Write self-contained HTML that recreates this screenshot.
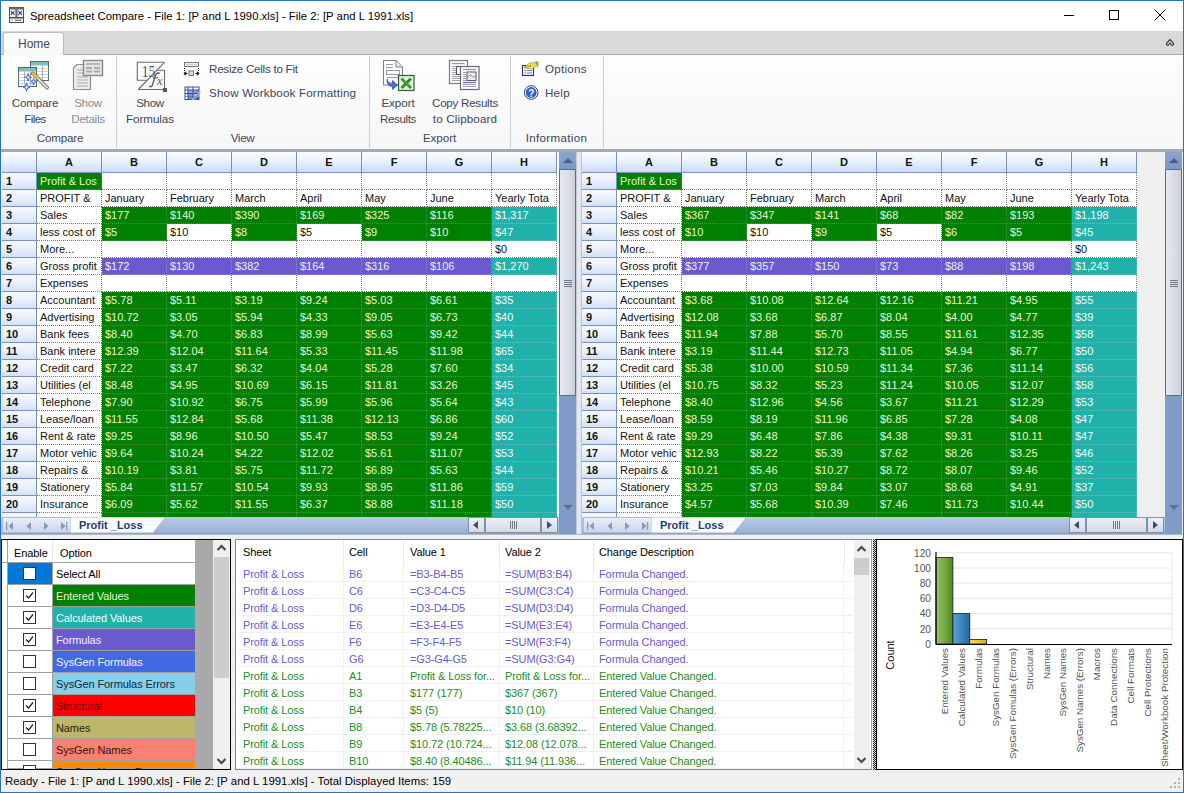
<!DOCTYPE html><html><head><meta charset="utf-8"><style>
*{margin:0;padding:0;box-sizing:border-box}
html,body{width:1184px;height:793px;overflow:hidden;background:#f0f0f0;font-family:"Liberation Sans",sans-serif;color:#000}
.abs{position:absolute}
#win{position:absolute;left:0;top:0;width:1184px;height:793px;border:1px solid #2a72c0;}
#title{position:absolute;left:1px;top:1px;width:1182px;height:30px;background:#fff}
#titletext{position:absolute;left:30px;top:10px;font-size:11.3px;color:#000;white-space:nowrap;letter-spacing:0.026px}
#tabstrip{position:absolute;left:1px;top:31px;width:1182px;height:24px;background:#d9d9d9;border-bottom:1px solid #a8a8a8}
#hometab{position:absolute;left:3px;top:32px;width:61px;height:23px;background:linear-gradient(#fdfdfd,#f8f8f8);border:1px solid #bdbdbd;border-bottom:none;border-radius:3px 3px 0 0}
#hometab span{position:absolute;left:14px;top:4px;font-size:12px;color:#3b4a5e}
#ribbon{position:absolute;left:1px;top:55px;width:1182px;height:94px;background:linear-gradient(#fdfdfd,#f7f7f7)}
.rsep{position:absolute;top:56px;width:1px;height:92px;background:#c9ced6}
.rt{position:absolute;font-size:11.6px;color:#3c4656;white-space:nowrap;line-height:14px}
.rc{text-align:center}
.dis{color:#8c8c8c}
#ribline{position:absolute;left:1px;top:149px;width:1182px;height:3px;background:#a3aab6}
.pane{position:absolute;top:152px;height:382px;overflow:hidden;background:#fff}
.hdr{position:absolute;top:0;height:21px;background:linear-gradient(#fbfdff 0%,#eaf2fd 45%,#cadcf7 100%);border-right:1px solid #7890bb;border-bottom:1px solid #7890bb;font-weight:bold;font-size:11px;text-align:center;line-height:20px;color:#111}
.rh{position:absolute;left:0;height:17px;background:linear-gradient(#f6f9fe 0%,#e9f0fc 50%,#d3e1f7 100%);border-right:1px solid #7890bb;border-bottom:1px solid #7890bb;font-weight:bold;font-size:11px;line-height:16px;padding-left:4px;color:#111}
.c{position:absolute;height:17px;border-right:1px dotted #7a7a7a;border-bottom:1px dotted #7a7a7a;font-size:11px;line-height:16px;padding-left:3px;white-space:nowrap;overflow:hidden;color:#111}
.ot{position:absolute;font-size:11px;line-height:14px;white-space:nowrap;letter-spacing:-0.1px}
.g{background:#008000;color:#e6f8d6;border-color:#3f9a3f}
.t{background:#20b2aa;color:#effffa;border-color:#5ac8c0}
.p{background:#6a5acd;color:#f0eeff;border-color:#8f84d9}
</style></head><body>
<div id="win"></div>
<div id="title"></div>
<div id="titletext">Spreadsheet Compare - File 1: [P and L 1990.xls] - File 2: [P and L 1991.xls]</div>
<div id="tabstrip"></div><div id="hometab"><span>Home</span></div>
<div id="ribbon"></div>
<div class="rsep" style="left:116px"></div>
<div class="rsep" style="left:369px"></div>
<div class="rsep" style="left:510px"></div>
<div class="rsep" style="left:603px"></div>
<div class="rt rc" style="left:4px;top:96px;letter-spacing:-0.165px;width:62px;">Compare</div>
<div class="rt rc" style="left:4px;top:112px;letter-spacing:-0.621px;width:62px;">Files</div>
<div class="rt rc dis" style="left:61px;top:96px;letter-spacing:-0.339px;width:54px;">Show</div>
<div class="rt rc dis" style="left:61px;top:112px;letter-spacing:-0.292px;width:54px;">Details</div>
<div class="rt rc" style="left:4px;top:131px;letter-spacing:-0.165px;width:112px;">Compare</div>
<div class="rt rc" style="left:120px;top:96px;letter-spacing:-0.339px;width:60px;">Show</div>
<div class="rt rc" style="left:120px;top:112px;letter-spacing:-0.061px;width:60px;">Formulas</div>
<div class="rt " style="left:209px;top:62px;letter-spacing:-0.246px;">Resize Cells to Fit</div>
<div class="rt " style="left:209px;top:86px;letter-spacing:0.181px;">Show Workbook Formatting</div>
<div class="rt rc" style="left:116px;top:131px;letter-spacing:-0.307px;width:253px;">View</div>
<div class="rt rc" style="left:372px;top:96px;letter-spacing:-0.043px;width:52px;">Export</div>
<div class="rt rc" style="left:372px;top:112px;letter-spacing:-0.379px;width:52px;">Results</div>
<div class="rt rc" style="left:426px;top:96px;letter-spacing:-0.25px;width:78px;">Copy Results</div>
<div class="rt rc" style="left:426px;top:112px;letter-spacing:0.162px;width:78px;">to Clipboard</div>
<div class="rt rc" style="left:369px;top:131px;letter-spacing:-0.043px;width:141px;">Export</div>
<div class="rt " style="left:545px;top:62px;letter-spacing:0.272px;">Options</div>
<div class="rt " style="left:545px;top:86px;letter-spacing:0.247px;">Help</div>
<div class="rt rc" style="left:510px;top:131px;letter-spacing:0.32px;width:93px;">Information</div>
<svg class="abs" style="left:8px;top:6px" width="18" height="18" viewBox="0 0 18 18"><rect x="1.5" y="1.5" width="6.5" height="10" fill="#fff" stroke="#505050" stroke-width="1.1"/><rect x="9" y="1.5" width="6.5" height="10" fill="#fff" stroke="#505050" stroke-width="1.1"/><rect x="1.5" y="1.5" width="6.5" height="2" fill="#6a6a6a"/><rect x="9" y="1.5" width="6.5" height="2" fill="#6a6a6a"/><path d="M2.8,5 l3.8,4 M6.6,5 l-3.8,4 M10.3,5 l3.8,4 M14.1,5 l-3.8,4" stroke="#3a6494" stroke-width="1.1"/><rect x="3.9" y="6.2" width="1.6" height="1.6" fill="#1f4a7a"/><rect x="11.4" y="6.2" width="1.6" height="1.6" fill="#1f4a7a"/><rect x="1.5" y="12" width="14" height="4.5" fill="#fff" stroke="#505050" stroke-width="1.1"/><line x1="3.5" y1="14.3" x2="5" y2="14.3" stroke="#888"/><line x1="7" y1="14.3" x2="13.5" y2="14.3" stroke="#777" stroke-width="1.3"/></svg>
<svg class="abs" style="left:14px;top:56px" width="40" height="40" viewBox="0 0 40 40"><rect x="16.5" y="5.5" width="18" height="19" fill="#fff" stroke="#4d6a72" stroke-width="1"/><rect x="17" y="6" width="17" height="3.5" fill="#7fbfb8"/><line x1="16.5" y1="12.5" x2="34.5" y2="12.5" stroke="#e0c8c8" stroke-width="0.9"/><line x1="16.5" y1="15.5" x2="34.5" y2="15.5" stroke="#d8d0a8" stroke-width="0.9"/><line x1="16.5" y1="18.5" x2="34.5" y2="18.5" stroke="#c8c0e0" stroke-width="0.9"/><line x1="16.5" y1="21.5" x2="34.5" y2="21.5" stroke="#d0c8d0" stroke-width="0.9"/><line x1="28.5" y1="9.5" x2="28.5" y2="24.5" stroke="#8a9ab0" stroke-width="0.8"/><rect x="4.5" y="11.5" width="18" height="19" fill="#fff" stroke="#4d6a72" stroke-width="1"/><rect x="5" y="12" width="17" height="3.5" fill="#7fbfb8"/><line x1="4.5" y1="18.5" x2="22.5" y2="18.5" stroke="#e0c8c8" stroke-width="0.9"/><line x1="4.5" y1="21.5" x2="22.5" y2="21.5" stroke="#d8d0a8" stroke-width="0.9"/><line x1="4.5" y1="24.5" x2="22.5" y2="24.5" stroke="#c8c0e0" stroke-width="0.9"/><line x1="4.5" y1="27.5" x2="22.5" y2="27.5" stroke="#d0c8d0" stroke-width="0.9"/><line x1="10.5" y1="15.5" x2="10.5" y2="30.5" stroke="#8a9ab0" stroke-width="0.8"/><line x1="16.5" y1="15.5" x2="16.5" y2="30.5" stroke="#8a9ab0" stroke-width="0.8"/><line x1="19" y1="17.5" x2="33" y2="31.5" stroke="#4a4a4a" stroke-width="3.6" stroke-linecap="round"/><line x1="19" y1="17.5" x2="33" y2="31.5" stroke="#e4e4d4" stroke-width="2.2" stroke-linecap="round"/><line x1="19" y1="17.5" x2="23.5" y2="22" stroke="#e8c030" stroke-width="2.4" stroke-linecap="round"/><circle cx="13" cy="30" r="4.5" fill="#c0d0ff" opacity="0.3"/><path d="M14.2,17.5 L15.149999999999999,20.35 L17.43,21.3 L15.149999999999999,22.25 L14.2,25.1 L13.25,22.25 L10.969999999999999,21.3 L13.25,20.35 Z" fill="#dde4ff" stroke="#3a58d0" stroke-width="0.9"/><path d="M19.6,22.3 L20.425,24.775000000000002 L22.405,25.6 L20.425,26.425 L19.6,28.900000000000002 L18.775000000000002,26.425 L16.795,25.6 L18.775000000000002,24.775000000000002 Z" fill="#dde4ff" stroke="#3a58d0" stroke-width="0.9"/><path d="M12.6,27.2 L13.6,30.2 L16.0,31.2 L13.6,32.2 L12.6,35.2 L11.6,32.2 L9.2,31.2 L11.6,30.2 Z" fill="#dde4ff" stroke="#3a58d0" stroke-width="0.9"/></svg>
<svg class="abs" style="left:68px;top:56px" width="40" height="40" viewBox="0 0 40 40"><path d="M5.5,12 L9,8.5 L22.5,8.5 L22.5,33.5 L5.5,33.5 Z" fill="#ececec" stroke="#8c8c8c" stroke-width="1.2"/><line x1="9" y1="14" x2="20" y2="14" stroke="#a8a8a8" stroke-width="1"/><line x1="9" y1="17" x2="20" y2="17" stroke="#a8a8a8" stroke-width="1"/><line x1="9" y1="21" x2="20" y2="21" stroke="#a8a8a8" stroke-width="1"/><line x1="9" y1="24" x2="20" y2="24" stroke="#a8a8a8" stroke-width="1"/><line x1="9" y1="27" x2="20" y2="27" stroke="#a8a8a8" stroke-width="1"/><line x1="9" y1="30" x2="20" y2="30" stroke="#a8a8a8" stroke-width="1"/><rect x="15.5" y="4.5" width="19" height="15" fill="#e4e4e4" stroke="#8a8a8a" stroke-width="1.4"/><line x1="18" y1="8" x2="32" y2="8" stroke="#aaa" stroke-width="1.5"/><rect x="18" y="11" width="6" height="2" fill="#aaa"/><rect x="26" y="11" width="6" height="2" fill="#aaa"/><rect x="18" y="14.5" width="6" height="2" fill="#aaa"/><rect x="26" y="14.5" width="6" height="2" fill="#aaa"/></svg>
<svg class="abs" style="left:132px;top:58px" width="40" height="40" viewBox="0 0 40 40"><path d="M14,22.3 L5.3,22.3 L5.3,4.3 L32.5,4.3" fill="none" stroke="#6a6a6a" stroke-width="1.1"/><path d="M25,12.3 L32.5,12.3 L32.5,31.5 L6.3,31.5" fill="none" stroke="#6a6a6a" stroke-width="1.1"/><line x1="6.3" y1="31.5" x2="32.5" y2="4.3" stroke="#6a6a6a" stroke-width="1.1"/><rect x="31" y="30" width="4" height="4" fill="#5a5a5a"/><text x="9.8" y="19" font-family="Liberation Serif" font-size="17.5" fill="#555" textLength="13.5" lengthAdjust="spacingAndGlyphs">15</text><path d="M17.3,28.3 Q19.3,30 20.6,26.5 L23.4,17.5 Q24.6,14.2 27.8,15.2" fill="none" stroke="#555" stroke-width="1.3"/><path d="M20.8,19.8 H26" stroke="#555" stroke-width="1.1"/><text x="25" y="27" font-family="Liberation Serif" font-style="italic" font-size="12" fill="#555">x</text></svg>
<svg class="abs" style="left:178px;top:58px" width="28" height="46" viewBox="0 0 28 46"><rect x="6.5" y="4.5" width="14" height="4" fill="#eef2f8" stroke="#777" stroke-width="1"/><line x1="8" y1="6.5" x2="19" y2="6.5" stroke="#c0cce0" stroke-width="1"/><path d="M6.5,10 v1 M6.5,12 v1 M20.5,10 v1 M20.5,12 v1" stroke="#111" stroke-width="1"/><path d="M6,15.5 h3.5 M6,15.5 l2,-1.5 M6,15.5 l2,1.5 M21,15.5 h-3.5 M21,15.5 l-2,-1.5 M21,15.5 l-2,1.5" stroke="#111" stroke-width="1.2"/><rect x="11" y="13" width="4.5" height="4.5" fill="#ddd" stroke="#777" stroke-width="1"/><rect x="6.5" y="28.5" width="15" height="13.5" fill="#3c4c8c"/><rect x="7.5" y="29.5" width="2" height="2" fill="#fff"/><rect x="10.5" y="29.5" width="4" height="2" fill="#fff"/><rect x="15.5" y="29.5" width="5" height="2" fill="#fff"/><rect x="7.5" y="32.5" width="2" height="2.5" fill="#fff"/><rect x="7.5" y="36" width="2" height="2.5" fill="#fff"/><rect x="7.5" y="39" width="2" height="2" fill="#fff"/><rect x="10.5" y="32.5" width="4" height="2.5" fill="#8fb0e8"/><rect x="15.5" y="32.5" width="5" height="2.5" fill="#6fa8e8"/><rect x="10.5" y="36" width="4" height="2.5" fill="#7aa0e0"/><rect x="15.5" y="36" width="5" height="2.5" fill="#9ac0f0"/><rect x="10.5" y="39" width="4" height="2" fill="#7090d8"/><path d="M13,43 Q15,39 20,36 L21.5,37.5 Q18,41 13,43 Z" fill="#5a80d8" stroke="#fff" stroke-width="0.5"/><path d="M19.5,36 L22,33 L23,35.5 Z" fill="#e8c850"/></svg>
<svg class="abs" style="left:378px;top:56px" width="40" height="40" viewBox="0 0 40 40"><path d="M5.5,4.5 L18,4.5 L24.5,11 L24.5,29 L5.5,29 Z" fill="#fff" stroke="#7c8090" stroke-width="1.1"/><path d="M18,4.5 L18,11 L24.5,11" fill="#e6e8f4" stroke="#7c8090" stroke-width="1"/><path d="M8,8.5 h7 M8,11.5 h7" stroke="#8a8f9f" stroke-width="0.9"/><rect x="8.5" y="14.5" width="13" height="4" fill="#fff" stroke="#8a8f9f" stroke-width="0.9"/><path d="M8.5,21.5 h13" stroke="#8a8f9f" stroke-width="0.9"/><path d="M9,23 Q10,27.5 14.5,27.5 L14.5,24.5 L19.5,29 L14.5,33.5 L14.5,30.5 Q9,30.5 9,23 Z" fill="#4a6ed8" stroke="#2a3ea0" stroke-width="0.7"/><rect x="20.5" y="19.5" width="15.5" height="15" fill="#e2f4d8" stroke="#2e5a34" stroke-width="1.2"/><path d="M23.5,22.5 L33,32 M33,22.5 L23.5,32" stroke="#2a8a2a" stroke-width="2.8"/><path d="M24,22.5 L33,31.5" stroke="#5fc04a" stroke-width="1"/></svg>
<svg class="abs" style="left:444px;top:56px" width="40" height="40" viewBox="0 0 40 40"><rect x="5.5" y="4.5" width="18" height="23" fill="#fff" stroke="#7a7a88" stroke-width="1.2"/><line x1="8" y1="7.5" x2="20.5" y2="7.5" stroke="#999" stroke-width="1.3"/><line x1="8" y1="10.5" x2="12" y2="10.5" stroke="#8a8a9a" stroke-width="0.8"/><line x1="8" y1="12.5" x2="12" y2="12.5" stroke="#8a8a9a" stroke-width="0.8"/><line x1="8" y1="14.5" x2="12" y2="14.5" stroke="#8a8a9a" stroke-width="0.8"/><line x1="8" y1="16.5" x2="12" y2="16.5" stroke="#8a8a9a" stroke-width="0.8"/><line x1="8" y1="18.5" x2="12" y2="18.5" stroke="#8a8a9a" stroke-width="0.8"/><path d="M8,20.5 h13 M8,22.5 h13 M8,24.5 h13" stroke="#8a8a9a" stroke-width="0.8"/><rect x="12.5" y="10.5" width="5" height="8" fill="#fff" stroke="#555" stroke-width="1"/><rect x="16.5" y="10.5" width="18.5" height="23" fill="#fff" stroke="#6a6a7a" stroke-width="1.2"/><line x1="19" y1="13.5" x2="32" y2="13.5" stroke="#999" stroke-width="1.3"/><line x1="19" y1="16.5" x2="22" y2="16.5" stroke="#8a8a9a" stroke-width="0.8"/><line x1="19" y1="18.5" x2="22" y2="18.5" stroke="#8a8a9a" stroke-width="0.8"/><line x1="19" y1="20.5" x2="22" y2="20.5" stroke="#8a8a9a" stroke-width="0.8"/><line x1="19" y1="22.5" x2="22" y2="22.5" stroke="#8a8a9a" stroke-width="0.8"/><line x1="19" y1="24.5" x2="22" y2="24.5" stroke="#8a8a9a" stroke-width="0.8"/><rect x="23" y="16" width="9" height="8.5" fill="#f4f4f4" stroke="#555" stroke-width="1"/><path d="M23.5,21 L26.5,18.5 L29,21.5 L31.5,19.5" fill="none" stroke="#666" stroke-width="0.8"/><path d="M19,26.5 h13" stroke="#5a6ad0" stroke-width="1.2"/><path d="M19,28.5 h13 M19,30.5 h13" stroke="#8a8a9a" stroke-width="0.8"/></svg>
<svg class="abs" style="left:516px;top:58px" width="28" height="46" viewBox="0 0 28 46"><rect x="6.5" y="7.5" width="11" height="10" fill="#f4f4ff" stroke="#2e3460" stroke-width="1.1"/><path d="M8.5,12.5 h1.5 M11,12.5 h5 M8.5,15 h1.5 M11,15 h5" stroke="#6a70a0" stroke-width="0.9"/><path d="M8,10 L13,5 L20,4.5 L22,7 L16,11 Z" fill="#e8d860" stroke="#a09020" stroke-width="0.6"/><path d="M9,9.5 l2,-2 M11,9.5 l2,-2 M13,9 l2,-2" stroke="#707040" stroke-width="0.8"/><path d="M19,3.5 L22.5,3.5 L22,10 Z" fill="#80b050"/><circle cx="15.2" cy="34.5" r="6.8" fill="#fff" stroke="#2a3a80" stroke-width="1"/><circle cx="15.2" cy="34.5" r="5.4" fill="#2f5ec8"/><text x="15.2" y="38.5" font-family="Liberation Sans" font-weight="bold" font-size="10" fill="#fff" text-anchor="middle">?</text></svg>
<div class="abs" style="left:1064px;top:15px;width:10px;height:1px;background:#000"></div>
<div class="abs" style="left:1109px;top:10px;width:10px;height:10px;border:1px solid #000"></div>
<svg class="abs" style="left:1154px;top:9px" width="12" height="12" viewBox="0 0 12 12"><path d="M0.5,0.5 L11.5,11.5 M11.5,0.5 L0.5,11.5" stroke="#000" stroke-width="1"/></svg>
<svg class="abs" style="left:1164px;top:36px" width="12" height="12" viewBox="0 0 12 12"><path d="M2.5,7.5 L6,3.5 L9.5,7.5 Q9.8,9.3 8,9.3 L6,7.2 L4,9.3 Q2.2,9.3 2.5,7.5 Z" fill="none" stroke="#444" stroke-width="1.2" stroke-linejoin="round"/></svg>
<div id="ribline"></div>
<div class="pane" style="left:2px;width:557px">
<div class="hdr" style="left:0;width:35px"></div>
<div class="hdr" style="left:35px;width:65px">A</div>
<div class="hdr" style="left:100px;width:65px">B</div>
<div class="hdr" style="left:165px;width:65px">C</div>
<div class="hdr" style="left:230px;width:65px">D</div>
<div class="hdr" style="left:295px;width:65px">E</div>
<div class="hdr" style="left:360px;width:65px">F</div>
<div class="hdr" style="left:425px;width:65px">G</div>
<div class="hdr" style="left:490px;width:65px">H</div>
<div class="rh" style="top:21px;width:35px">1</div>
<div class="c g" style="left:35px;top:21px;width:65px">Profit &amp; Los</div>
<div class="c " style="left:100px;top:21px;width:65px"></div>
<div class="c " style="left:165px;top:21px;width:65px"></div>
<div class="c " style="left:230px;top:21px;width:65px"></div>
<div class="c " style="left:295px;top:21px;width:65px"></div>
<div class="c " style="left:360px;top:21px;width:65px"></div>
<div class="c " style="left:425px;top:21px;width:65px"></div>
<div class="c " style="left:490px;top:21px;width:65px"></div>
<div class="rh" style="top:38px;width:35px">2</div>
<div class="c " style="left:35px;top:38px;width:65px">PROFIT &amp;</div>
<div class="c " style="left:100px;top:38px;width:65px">January</div>
<div class="c " style="left:165px;top:38px;width:65px">February</div>
<div class="c " style="left:230px;top:38px;width:65px">March</div>
<div class="c " style="left:295px;top:38px;width:65px">April</div>
<div class="c " style="left:360px;top:38px;width:65px">May</div>
<div class="c " style="left:425px;top:38px;width:65px">June</div>
<div class="c " style="left:490px;top:38px;width:65px">Yearly Tota</div>
<div class="rh" style="top:55px;width:35px">3</div>
<div class="c " style="left:35px;top:55px;width:65px">Sales</div>
<div class="c g" style="left:100px;top:55px;width:65px">$177</div>
<div class="c g" style="left:165px;top:55px;width:65px">$140</div>
<div class="c g" style="left:230px;top:55px;width:65px">$390</div>
<div class="c g" style="left:295px;top:55px;width:65px">$169</div>
<div class="c g" style="left:360px;top:55px;width:65px">$325</div>
<div class="c g" style="left:425px;top:55px;width:65px">$116</div>
<div class="c t" style="left:490px;top:55px;width:65px">$1,317</div>
<div class="rh" style="top:72px;width:35px">4</div>
<div class="c " style="left:35px;top:72px;width:65px">less cost of</div>
<div class="c g" style="left:100px;top:72px;width:65px">$5</div>
<div class="c " style="left:165px;top:72px;width:65px">$10</div>
<div class="c g" style="left:230px;top:72px;width:65px">$8</div>
<div class="c " style="left:295px;top:72px;width:65px">$5</div>
<div class="c g" style="left:360px;top:72px;width:65px">$9</div>
<div class="c g" style="left:425px;top:72px;width:65px">$10</div>
<div class="c t" style="left:490px;top:72px;width:65px">$47</div>
<div class="rh" style="top:89px;width:35px">5</div>
<div class="c " style="left:35px;top:89px;width:65px">More...</div>
<div class="c " style="left:100px;top:89px;width:65px"></div>
<div class="c " style="left:165px;top:89px;width:65px"></div>
<div class="c " style="left:230px;top:89px;width:65px"></div>
<div class="c " style="left:295px;top:89px;width:65px"></div>
<div class="c " style="left:360px;top:89px;width:65px"></div>
<div class="c " style="left:425px;top:89px;width:65px"></div>
<div class="c " style="left:490px;top:89px;width:65px">$0</div>
<div class="rh" style="top:106px;width:35px">6</div>
<div class="c " style="left:35px;top:106px;width:65px">Gross profit</div>
<div class="c p" style="left:100px;top:106px;width:65px">$172</div>
<div class="c p" style="left:165px;top:106px;width:65px">$130</div>
<div class="c p" style="left:230px;top:106px;width:65px">$382</div>
<div class="c p" style="left:295px;top:106px;width:65px">$164</div>
<div class="c p" style="left:360px;top:106px;width:65px">$316</div>
<div class="c p" style="left:425px;top:106px;width:65px">$106</div>
<div class="c t" style="left:490px;top:106px;width:65px">$1,270</div>
<div class="rh" style="top:123px;width:35px">7</div>
<div class="c " style="left:35px;top:123px;width:65px">Expenses</div>
<div class="c " style="left:100px;top:123px;width:65px"></div>
<div class="c " style="left:165px;top:123px;width:65px"></div>
<div class="c " style="left:230px;top:123px;width:65px"></div>
<div class="c " style="left:295px;top:123px;width:65px"></div>
<div class="c " style="left:360px;top:123px;width:65px"></div>
<div class="c " style="left:425px;top:123px;width:65px"></div>
<div class="c " style="left:490px;top:123px;width:65px"></div>
<div class="rh" style="top:140px;width:35px">8</div>
<div class="c " style="left:35px;top:140px;width:65px">Accountant</div>
<div class="c g" style="left:100px;top:140px;width:65px">$5.78</div>
<div class="c g" style="left:165px;top:140px;width:65px">$5.11</div>
<div class="c g" style="left:230px;top:140px;width:65px">$3.19</div>
<div class="c g" style="left:295px;top:140px;width:65px">$9.24</div>
<div class="c g" style="left:360px;top:140px;width:65px">$5.03</div>
<div class="c g" style="left:425px;top:140px;width:65px">$6.61</div>
<div class="c t" style="left:490px;top:140px;width:65px">$35</div>
<div class="rh" style="top:157px;width:35px">9</div>
<div class="c " style="left:35px;top:157px;width:65px">Advertising</div>
<div class="c g" style="left:100px;top:157px;width:65px">$10.72</div>
<div class="c g" style="left:165px;top:157px;width:65px">$3.05</div>
<div class="c g" style="left:230px;top:157px;width:65px">$5.94</div>
<div class="c g" style="left:295px;top:157px;width:65px">$4.33</div>
<div class="c g" style="left:360px;top:157px;width:65px">$9.05</div>
<div class="c g" style="left:425px;top:157px;width:65px">$6.73</div>
<div class="c t" style="left:490px;top:157px;width:65px">$40</div>
<div class="rh" style="top:174px;width:35px">10</div>
<div class="c " style="left:35px;top:174px;width:65px">Bank fees</div>
<div class="c g" style="left:100px;top:174px;width:65px">$8.40</div>
<div class="c g" style="left:165px;top:174px;width:65px">$4.70</div>
<div class="c g" style="left:230px;top:174px;width:65px">$6.83</div>
<div class="c g" style="left:295px;top:174px;width:65px">$8.99</div>
<div class="c g" style="left:360px;top:174px;width:65px">$5.63</div>
<div class="c g" style="left:425px;top:174px;width:65px">$9.42</div>
<div class="c t" style="left:490px;top:174px;width:65px">$44</div>
<div class="rh" style="top:191px;width:35px">11</div>
<div class="c " style="left:35px;top:191px;width:65px">Bank intere</div>
<div class="c g" style="left:100px;top:191px;width:65px">$12.39</div>
<div class="c g" style="left:165px;top:191px;width:65px">$12.04</div>
<div class="c g" style="left:230px;top:191px;width:65px">$11.64</div>
<div class="c g" style="left:295px;top:191px;width:65px">$5.33</div>
<div class="c g" style="left:360px;top:191px;width:65px">$11.45</div>
<div class="c g" style="left:425px;top:191px;width:65px">$11.98</div>
<div class="c t" style="left:490px;top:191px;width:65px">$65</div>
<div class="rh" style="top:208px;width:35px">12</div>
<div class="c " style="left:35px;top:208px;width:65px">Credit card</div>
<div class="c g" style="left:100px;top:208px;width:65px">$7.22</div>
<div class="c g" style="left:165px;top:208px;width:65px">$3.47</div>
<div class="c g" style="left:230px;top:208px;width:65px">$6.32</div>
<div class="c g" style="left:295px;top:208px;width:65px">$4.04</div>
<div class="c g" style="left:360px;top:208px;width:65px">$5.28</div>
<div class="c g" style="left:425px;top:208px;width:65px">$7.60</div>
<div class="c t" style="left:490px;top:208px;width:65px">$34</div>
<div class="rh" style="top:225px;width:35px">13</div>
<div class="c " style="left:35px;top:225px;width:65px">Utilities (el</div>
<div class="c g" style="left:100px;top:225px;width:65px">$8.48</div>
<div class="c g" style="left:165px;top:225px;width:65px">$4.95</div>
<div class="c g" style="left:230px;top:225px;width:65px">$10.69</div>
<div class="c g" style="left:295px;top:225px;width:65px">$6.15</div>
<div class="c g" style="left:360px;top:225px;width:65px">$11.81</div>
<div class="c g" style="left:425px;top:225px;width:65px">$3.26</div>
<div class="c t" style="left:490px;top:225px;width:65px">$45</div>
<div class="rh" style="top:242px;width:35px">14</div>
<div class="c " style="left:35px;top:242px;width:65px">Telephone</div>
<div class="c g" style="left:100px;top:242px;width:65px">$7.90</div>
<div class="c g" style="left:165px;top:242px;width:65px">$10.92</div>
<div class="c g" style="left:230px;top:242px;width:65px">$6.75</div>
<div class="c g" style="left:295px;top:242px;width:65px">$5.99</div>
<div class="c g" style="left:360px;top:242px;width:65px">$5.96</div>
<div class="c g" style="left:425px;top:242px;width:65px">$5.64</div>
<div class="c t" style="left:490px;top:242px;width:65px">$43</div>
<div class="rh" style="top:259px;width:35px">15</div>
<div class="c " style="left:35px;top:259px;width:65px">Lease/loan</div>
<div class="c g" style="left:100px;top:259px;width:65px">$11.55</div>
<div class="c g" style="left:165px;top:259px;width:65px">$12.84</div>
<div class="c g" style="left:230px;top:259px;width:65px">$5.68</div>
<div class="c g" style="left:295px;top:259px;width:65px">$11.38</div>
<div class="c g" style="left:360px;top:259px;width:65px">$12.13</div>
<div class="c g" style="left:425px;top:259px;width:65px">$6.86</div>
<div class="c t" style="left:490px;top:259px;width:65px">$60</div>
<div class="rh" style="top:276px;width:35px">16</div>
<div class="c " style="left:35px;top:276px;width:65px">Rent &amp; rate</div>
<div class="c g" style="left:100px;top:276px;width:65px">$9.25</div>
<div class="c g" style="left:165px;top:276px;width:65px">$8.96</div>
<div class="c g" style="left:230px;top:276px;width:65px">$10.50</div>
<div class="c g" style="left:295px;top:276px;width:65px">$5.47</div>
<div class="c g" style="left:360px;top:276px;width:65px">$8.53</div>
<div class="c g" style="left:425px;top:276px;width:65px">$9.24</div>
<div class="c t" style="left:490px;top:276px;width:65px">$52</div>
<div class="rh" style="top:293px;width:35px">17</div>
<div class="c " style="left:35px;top:293px;width:65px">Motor vehic</div>
<div class="c g" style="left:100px;top:293px;width:65px">$9.64</div>
<div class="c g" style="left:165px;top:293px;width:65px">$10.24</div>
<div class="c g" style="left:230px;top:293px;width:65px">$4.22</div>
<div class="c g" style="left:295px;top:293px;width:65px">$12.02</div>
<div class="c g" style="left:360px;top:293px;width:65px">$5.61</div>
<div class="c g" style="left:425px;top:293px;width:65px">$11.07</div>
<div class="c t" style="left:490px;top:293px;width:65px">$53</div>
<div class="rh" style="top:310px;width:35px">18</div>
<div class="c " style="left:35px;top:310px;width:65px">Repairs &amp;</div>
<div class="c g" style="left:100px;top:310px;width:65px">$10.19</div>
<div class="c g" style="left:165px;top:310px;width:65px">$3.81</div>
<div class="c g" style="left:230px;top:310px;width:65px">$5.75</div>
<div class="c g" style="left:295px;top:310px;width:65px">$11.72</div>
<div class="c g" style="left:360px;top:310px;width:65px">$6.89</div>
<div class="c g" style="left:425px;top:310px;width:65px">$5.63</div>
<div class="c t" style="left:490px;top:310px;width:65px">$44</div>
<div class="rh" style="top:327px;width:35px">19</div>
<div class="c " style="left:35px;top:327px;width:65px">Stationery</div>
<div class="c g" style="left:100px;top:327px;width:65px">$5.84</div>
<div class="c g" style="left:165px;top:327px;width:65px">$11.57</div>
<div class="c g" style="left:230px;top:327px;width:65px">$10.54</div>
<div class="c g" style="left:295px;top:327px;width:65px">$9.93</div>
<div class="c g" style="left:360px;top:327px;width:65px">$8.95</div>
<div class="c g" style="left:425px;top:327px;width:65px">$11.86</div>
<div class="c t" style="left:490px;top:327px;width:65px">$59</div>
<div class="rh" style="top:344px;width:35px">20</div>
<div class="c " style="left:35px;top:344px;width:65px">Insurance</div>
<div class="c g" style="left:100px;top:344px;width:65px">$6.09</div>
<div class="c g" style="left:165px;top:344px;width:65px">$5.62</div>
<div class="c g" style="left:230px;top:344px;width:65px">$11.55</div>
<div class="c g" style="left:295px;top:344px;width:65px">$6.37</div>
<div class="c g" style="left:360px;top:344px;width:65px">$8.88</div>
<div class="c g" style="left:425px;top:344px;width:65px">$11.18</div>
<div class="c t" style="left:490px;top:344px;width:65px">$50</div>
<div class="rh" style="top:361px;width:35px"></div>
<div class="c " style="left:35px;top:361px;width:65px"></div>
<div class="c g" style="left:100px;top:361px;width:65px"></div>
<div class="c g" style="left:165px;top:361px;width:65px"></div>
<div class="c g" style="left:230px;top:361px;width:65px"></div>
<div class="c g" style="left:295px;top:361px;width:65px"></div>
<div class="c g" style="left:360px;top:361px;width:65px"></div>
<div class="c g" style="left:425px;top:361px;width:65px"></div>
<div class="c t" style="left:490px;top:361px;width:65px"></div>
</div>
<div class="pane" style="left:582px;width:583px">
<div class="hdr" style="left:0;width:35px"></div>
<div class="hdr" style="left:35px;width:65px">A</div>
<div class="hdr" style="left:100px;width:65px">B</div>
<div class="hdr" style="left:165px;width:65px">C</div>
<div class="hdr" style="left:230px;width:65px">D</div>
<div class="hdr" style="left:295px;width:65px">E</div>
<div class="hdr" style="left:360px;width:65px">F</div>
<div class="hdr" style="left:425px;width:65px">G</div>
<div class="hdr" style="left:490px;width:65px">H</div>
<div class="rh" style="top:21px;width:35px">1</div>
<div class="c g" style="left:35px;top:21px;width:65px">Profit &amp; Los</div>
<div class="c " style="left:100px;top:21px;width:65px"></div>
<div class="c " style="left:165px;top:21px;width:65px"></div>
<div class="c " style="left:230px;top:21px;width:65px"></div>
<div class="c " style="left:295px;top:21px;width:65px"></div>
<div class="c " style="left:360px;top:21px;width:65px"></div>
<div class="c " style="left:425px;top:21px;width:65px"></div>
<div class="c " style="left:490px;top:21px;width:65px"></div>
<div class="rh" style="top:38px;width:35px">2</div>
<div class="c " style="left:35px;top:38px;width:65px">PROFIT &amp;</div>
<div class="c " style="left:100px;top:38px;width:65px">January</div>
<div class="c " style="left:165px;top:38px;width:65px">February</div>
<div class="c " style="left:230px;top:38px;width:65px">March</div>
<div class="c " style="left:295px;top:38px;width:65px">April</div>
<div class="c " style="left:360px;top:38px;width:65px">May</div>
<div class="c " style="left:425px;top:38px;width:65px">June</div>
<div class="c " style="left:490px;top:38px;width:65px">Yearly Tota</div>
<div class="rh" style="top:55px;width:35px">3</div>
<div class="c " style="left:35px;top:55px;width:65px">Sales</div>
<div class="c g" style="left:100px;top:55px;width:65px">$367</div>
<div class="c g" style="left:165px;top:55px;width:65px">$347</div>
<div class="c g" style="left:230px;top:55px;width:65px">$141</div>
<div class="c g" style="left:295px;top:55px;width:65px">$68</div>
<div class="c g" style="left:360px;top:55px;width:65px">$82</div>
<div class="c g" style="left:425px;top:55px;width:65px">$193</div>
<div class="c t" style="left:490px;top:55px;width:65px">$1,198</div>
<div class="rh" style="top:72px;width:35px">4</div>
<div class="c " style="left:35px;top:72px;width:65px">less cost of</div>
<div class="c g" style="left:100px;top:72px;width:65px">$10</div>
<div class="c " style="left:165px;top:72px;width:65px">$10</div>
<div class="c g" style="left:230px;top:72px;width:65px">$9</div>
<div class="c " style="left:295px;top:72px;width:65px">$5</div>
<div class="c g" style="left:360px;top:72px;width:65px">$6</div>
<div class="c g" style="left:425px;top:72px;width:65px">$5</div>
<div class="c t" style="left:490px;top:72px;width:65px">$45</div>
<div class="rh" style="top:89px;width:35px">5</div>
<div class="c " style="left:35px;top:89px;width:65px">More...</div>
<div class="c " style="left:100px;top:89px;width:65px"></div>
<div class="c " style="left:165px;top:89px;width:65px"></div>
<div class="c " style="left:230px;top:89px;width:65px"></div>
<div class="c " style="left:295px;top:89px;width:65px"></div>
<div class="c " style="left:360px;top:89px;width:65px"></div>
<div class="c " style="left:425px;top:89px;width:65px"></div>
<div class="c " style="left:490px;top:89px;width:65px">$0</div>
<div class="rh" style="top:106px;width:35px">6</div>
<div class="c " style="left:35px;top:106px;width:65px">Gross profit</div>
<div class="c p" style="left:100px;top:106px;width:65px">$377</div>
<div class="c p" style="left:165px;top:106px;width:65px">$357</div>
<div class="c p" style="left:230px;top:106px;width:65px">$150</div>
<div class="c p" style="left:295px;top:106px;width:65px">$73</div>
<div class="c p" style="left:360px;top:106px;width:65px">$88</div>
<div class="c p" style="left:425px;top:106px;width:65px">$198</div>
<div class="c t" style="left:490px;top:106px;width:65px">$1,243</div>
<div class="rh" style="top:123px;width:35px">7</div>
<div class="c " style="left:35px;top:123px;width:65px">Expenses</div>
<div class="c " style="left:100px;top:123px;width:65px"></div>
<div class="c " style="left:165px;top:123px;width:65px"></div>
<div class="c " style="left:230px;top:123px;width:65px"></div>
<div class="c " style="left:295px;top:123px;width:65px"></div>
<div class="c " style="left:360px;top:123px;width:65px"></div>
<div class="c " style="left:425px;top:123px;width:65px"></div>
<div class="c " style="left:490px;top:123px;width:65px"></div>
<div class="rh" style="top:140px;width:35px">8</div>
<div class="c " style="left:35px;top:140px;width:65px">Accountant</div>
<div class="c g" style="left:100px;top:140px;width:65px">$3.68</div>
<div class="c g" style="left:165px;top:140px;width:65px">$10.08</div>
<div class="c g" style="left:230px;top:140px;width:65px">$12.64</div>
<div class="c g" style="left:295px;top:140px;width:65px">$12.16</div>
<div class="c g" style="left:360px;top:140px;width:65px">$11.21</div>
<div class="c g" style="left:425px;top:140px;width:65px">$4.95</div>
<div class="c t" style="left:490px;top:140px;width:65px">$55</div>
<div class="rh" style="top:157px;width:35px">9</div>
<div class="c " style="left:35px;top:157px;width:65px">Advertising</div>
<div class="c g" style="left:100px;top:157px;width:65px">$12.08</div>
<div class="c g" style="left:165px;top:157px;width:65px">$3.68</div>
<div class="c g" style="left:230px;top:157px;width:65px">$6.87</div>
<div class="c g" style="left:295px;top:157px;width:65px">$8.04</div>
<div class="c g" style="left:360px;top:157px;width:65px">$4.00</div>
<div class="c g" style="left:425px;top:157px;width:65px">$4.77</div>
<div class="c t" style="left:490px;top:157px;width:65px">$39</div>
<div class="rh" style="top:174px;width:35px">10</div>
<div class="c " style="left:35px;top:174px;width:65px">Bank fees</div>
<div class="c g" style="left:100px;top:174px;width:65px">$11.94</div>
<div class="c g" style="left:165px;top:174px;width:65px">$7.88</div>
<div class="c g" style="left:230px;top:174px;width:65px">$5.70</div>
<div class="c g" style="left:295px;top:174px;width:65px">$8.55</div>
<div class="c g" style="left:360px;top:174px;width:65px">$11.61</div>
<div class="c g" style="left:425px;top:174px;width:65px">$12.35</div>
<div class="c t" style="left:490px;top:174px;width:65px">$58</div>
<div class="rh" style="top:191px;width:35px">11</div>
<div class="c " style="left:35px;top:191px;width:65px">Bank intere</div>
<div class="c g" style="left:100px;top:191px;width:65px">$3.19</div>
<div class="c g" style="left:165px;top:191px;width:65px">$11.44</div>
<div class="c g" style="left:230px;top:191px;width:65px">$12.73</div>
<div class="c g" style="left:295px;top:191px;width:65px">$11.05</div>
<div class="c g" style="left:360px;top:191px;width:65px">$4.94</div>
<div class="c g" style="left:425px;top:191px;width:65px">$6.77</div>
<div class="c t" style="left:490px;top:191px;width:65px">$50</div>
<div class="rh" style="top:208px;width:35px">12</div>
<div class="c " style="left:35px;top:208px;width:65px">Credit card</div>
<div class="c g" style="left:100px;top:208px;width:65px">$5.38</div>
<div class="c g" style="left:165px;top:208px;width:65px">$10.00</div>
<div class="c g" style="left:230px;top:208px;width:65px">$10.59</div>
<div class="c g" style="left:295px;top:208px;width:65px">$11.34</div>
<div class="c g" style="left:360px;top:208px;width:65px">$7.36</div>
<div class="c g" style="left:425px;top:208px;width:65px">$11.14</div>
<div class="c t" style="left:490px;top:208px;width:65px">$56</div>
<div class="rh" style="top:225px;width:35px">13</div>
<div class="c " style="left:35px;top:225px;width:65px">Utilities (el</div>
<div class="c g" style="left:100px;top:225px;width:65px">$10.75</div>
<div class="c g" style="left:165px;top:225px;width:65px">$8.32</div>
<div class="c g" style="left:230px;top:225px;width:65px">$5.23</div>
<div class="c g" style="left:295px;top:225px;width:65px">$11.24</div>
<div class="c g" style="left:360px;top:225px;width:65px">$10.05</div>
<div class="c g" style="left:425px;top:225px;width:65px">$12.07</div>
<div class="c t" style="left:490px;top:225px;width:65px">$58</div>
<div class="rh" style="top:242px;width:35px">14</div>
<div class="c " style="left:35px;top:242px;width:65px">Telephone</div>
<div class="c g" style="left:100px;top:242px;width:65px">$8.40</div>
<div class="c g" style="left:165px;top:242px;width:65px">$12.96</div>
<div class="c g" style="left:230px;top:242px;width:65px">$4.56</div>
<div class="c g" style="left:295px;top:242px;width:65px">$3.67</div>
<div class="c g" style="left:360px;top:242px;width:65px">$11.21</div>
<div class="c g" style="left:425px;top:242px;width:65px">$12.29</div>
<div class="c t" style="left:490px;top:242px;width:65px">$53</div>
<div class="rh" style="top:259px;width:35px">15</div>
<div class="c " style="left:35px;top:259px;width:65px">Lease/loan</div>
<div class="c g" style="left:100px;top:259px;width:65px">$8.59</div>
<div class="c g" style="left:165px;top:259px;width:65px">$8.19</div>
<div class="c g" style="left:230px;top:259px;width:65px">$11.96</div>
<div class="c g" style="left:295px;top:259px;width:65px">$6.85</div>
<div class="c g" style="left:360px;top:259px;width:65px">$7.28</div>
<div class="c g" style="left:425px;top:259px;width:65px">$4.08</div>
<div class="c t" style="left:490px;top:259px;width:65px">$47</div>
<div class="rh" style="top:276px;width:35px">16</div>
<div class="c " style="left:35px;top:276px;width:65px">Rent &amp; rate</div>
<div class="c g" style="left:100px;top:276px;width:65px">$9.29</div>
<div class="c g" style="left:165px;top:276px;width:65px">$6.48</div>
<div class="c g" style="left:230px;top:276px;width:65px">$7.86</div>
<div class="c g" style="left:295px;top:276px;width:65px">$4.38</div>
<div class="c g" style="left:360px;top:276px;width:65px">$9.31</div>
<div class="c g" style="left:425px;top:276px;width:65px">$10.11</div>
<div class="c t" style="left:490px;top:276px;width:65px">$47</div>
<div class="rh" style="top:293px;width:35px">17</div>
<div class="c " style="left:35px;top:293px;width:65px">Motor vehic</div>
<div class="c g" style="left:100px;top:293px;width:65px">$12.93</div>
<div class="c g" style="left:165px;top:293px;width:65px">$8.22</div>
<div class="c g" style="left:230px;top:293px;width:65px">$5.39</div>
<div class="c g" style="left:295px;top:293px;width:65px">$7.62</div>
<div class="c g" style="left:360px;top:293px;width:65px">$8.26</div>
<div class="c g" style="left:425px;top:293px;width:65px">$3.25</div>
<div class="c t" style="left:490px;top:293px;width:65px">$46</div>
<div class="rh" style="top:310px;width:35px">18</div>
<div class="c " style="left:35px;top:310px;width:65px">Repairs &amp;</div>
<div class="c g" style="left:100px;top:310px;width:65px">$10.21</div>
<div class="c g" style="left:165px;top:310px;width:65px">$5.46</div>
<div class="c g" style="left:230px;top:310px;width:65px">$10.27</div>
<div class="c g" style="left:295px;top:310px;width:65px">$8.72</div>
<div class="c g" style="left:360px;top:310px;width:65px">$8.07</div>
<div class="c g" style="left:425px;top:310px;width:65px">$9.46</div>
<div class="c t" style="left:490px;top:310px;width:65px">$52</div>
<div class="rh" style="top:327px;width:35px">19</div>
<div class="c " style="left:35px;top:327px;width:65px">Stationery</div>
<div class="c g" style="left:100px;top:327px;width:65px">$3.25</div>
<div class="c g" style="left:165px;top:327px;width:65px">$7.03</div>
<div class="c g" style="left:230px;top:327px;width:65px">$9.84</div>
<div class="c g" style="left:295px;top:327px;width:65px">$3.07</div>
<div class="c g" style="left:360px;top:327px;width:65px">$8.68</div>
<div class="c g" style="left:425px;top:327px;width:65px">$4.91</div>
<div class="c t" style="left:490px;top:327px;width:65px">$37</div>
<div class="rh" style="top:344px;width:35px">20</div>
<div class="c " style="left:35px;top:344px;width:65px">Insurance</div>
<div class="c g" style="left:100px;top:344px;width:65px">$4.57</div>
<div class="c g" style="left:165px;top:344px;width:65px">$5.68</div>
<div class="c g" style="left:230px;top:344px;width:65px">$10.39</div>
<div class="c g" style="left:295px;top:344px;width:65px">$7.46</div>
<div class="c g" style="left:360px;top:344px;width:65px">$11.73</div>
<div class="c g" style="left:425px;top:344px;width:65px">$10.44</div>
<div class="c t" style="left:490px;top:344px;width:65px">$50</div>
<div class="rh" style="top:361px;width:35px"></div>
<div class="c " style="left:35px;top:361px;width:65px"></div>
<div class="c g" style="left:100px;top:361px;width:65px"></div>
<div class="c g" style="left:165px;top:361px;width:65px"></div>
<div class="c g" style="left:230px;top:361px;width:65px"></div>
<div class="c g" style="left:295px;top:361px;width:65px"></div>
<div class="c g" style="left:360px;top:361px;width:65px"></div>
<div class="c g" style="left:425px;top:361px;width:65px"></div>
<div class="c t" style="left:490px;top:361px;width:65px"></div>
</div>
<div class="abs" style="left:559px;top:152px;width:17px;height:382px;background:#7f9bc8"></div>
<div class="abs" style="left:559px;top:152px;width:17px;height:17px;background:linear-gradient(#8aa6d0,#7a98c6)"></div>
<div class="abs" style="left:563px;top:158px;width:0;height:0;border-left:5px solid transparent;border-right:5px solid transparent;border-bottom:5px solid #4a5f86"></div>
<div class="abs" style="left:559px;top:169px;width:17px;height:227px;background:linear-gradient(90deg,#e4e8ef,#d8dee8 55%,#c8d0dc);border:1px solid #5f6c88;border-radius:1px"></div>
<div class="abs" style="left:564px;top:280px;width:8px;height:1px;background:#707888"></div>
<div class="abs" style="left:564px;top:282px;width:8px;height:1px;background:#707888"></div>
<div class="abs" style="left:564px;top:284px;width:8px;height:1px;background:#707888"></div>
<div class="abs" style="left:564px;top:286px;width:8px;height:1px;background:#707888"></div>
<div class="abs" style="left:563px;top:505px;width:0;height:0;border-left:5px solid transparent;border-right:5px solid transparent;border-top:5px solid #5a6f96"></div>
<div class="abs" style="left:1165px;top:152px;width:17px;height:382px;background:#7f9bc8"></div>
<div class="abs" style="left:1165px;top:152px;width:17px;height:17px;background:linear-gradient(#8aa6d0,#7a98c6)"></div>
<div class="abs" style="left:1169px;top:158px;width:0;height:0;border-left:5px solid transparent;border-right:5px solid transparent;border-bottom:5px solid #4a5f86"></div>
<div class="abs" style="left:1165px;top:169px;width:17px;height:227px;background:linear-gradient(90deg,#e4e8ef,#d8dee8 55%,#c8d0dc);border:1px solid #5f6c88;border-radius:1px"></div>
<div class="abs" style="left:1170px;top:280px;width:8px;height:1px;background:#707888"></div>
<div class="abs" style="left:1170px;top:282px;width:8px;height:1px;background:#707888"></div>
<div class="abs" style="left:1170px;top:284px;width:8px;height:1px;background:#707888"></div>
<div class="abs" style="left:1170px;top:286px;width:8px;height:1px;background:#707888"></div>
<div class="abs" style="left:1169px;top:505px;width:0;height:0;border-left:5px solid transparent;border-right:5px solid transparent;border-top:5px solid #5a6f96"></div>
<div class="abs" style="left:576px;top:152px;width:6px;height:382px;background:#e3e7ee;border-left:1px solid #c3cad6;border-right:1px solid #b9c3d3"></div>
<div class="abs" style="left:1137px;top:152px;width:28px;height:365px;background:#efefef"></div>
<div class="abs" style="left:1px;top:517px;width:558px;height:17px;background:linear-gradient(#b9cbe6,#98b1d8);border-bottom:1px solid #8d9fbd"></div>
<div class="abs" style="left:2px;top:517px;width:69px;height:16px;background:linear-gradient(#e9eff8,#c9d7ee);border:1px solid #b0bdd3"></div>
<svg class="abs" style="left:1px;top:517px" width="70" height="17"><g fill="#8a98b0"><rect x="5" y="5" width="1.3" height="8"/><polygon points="12,5 7.5,9 12,13"/><polygon points="30,5 25.5,9 30,13"/><polygon points="43,5 47.5,9 43,13"/><polygon points="60,5 64.5,9 60,13"/><rect x="65" y="5" width="1.3" height="8"/></g></svg>
<svg class="abs" style="left:70px;top:517px" width="100" height="17"><polygon points="0,0 96,0 83,16 0,16" fill="#fbfcfe" stroke="#9fb0cc" stroke-width="1"/></svg>
<div class="abs" style="left:79px;top:518px;font-size:11px;font-weight:bold;color:#233a7d;white-space:nowrap;line-height:15px">Profit _Loss</div>
<div class="abs" style="left:468px;top:517px;width:17px;height:16px;background:linear-gradient(#eef1f6,#d4dbe6);border:1px solid #8090ad"></div>
<div class="abs" style="left:485px;top:517px;width:56px;height:16px;background:linear-gradient(#eef1f6,#d4dbe6);border:1px solid #8090ad"></div>
<div class="abs" style="left:541px;top:517px;width:17px;height:16px;background:linear-gradient(#eef1f6,#d4dbe6);border:1px solid #8090ad"></div>
<div class="abs" style="left:473px;top:521px;width:0;height:0;border-top:4px solid transparent;border-bottom:4px solid transparent;border-right:5px solid #3e4c66"></div>
<div class="abs" style="left:547px;top:521px;width:0;height:0;border-top:4px solid transparent;border-bottom:4px solid transparent;border-left:5px solid #3e4c66"></div>
<div class="abs" style="left:510px;top:521px;width:1px;height:8px;background:#707888"></div>
<div class="abs" style="left:512px;top:521px;width:1px;height:8px;background:#707888"></div>
<div class="abs" style="left:514px;top:521px;width:1px;height:8px;background:#707888"></div>
<div class="abs" style="left:516px;top:521px;width:1px;height:8px;background:#707888"></div>
<div class="abs" style="left:582px;top:517px;width:583px;height:17px;background:linear-gradient(#b9cbe6,#98b1d8);border-bottom:1px solid #8d9fbd"></div>
<div class="abs" style="left:583px;top:517px;width:69px;height:16px;background:linear-gradient(#e9eff8,#c9d7ee);border:1px solid #b0bdd3"></div>
<svg class="abs" style="left:582px;top:517px" width="70" height="17"><g fill="#8a98b0"><rect x="5" y="5" width="1.3" height="8"/><polygon points="12,5 7.5,9 12,13"/><polygon points="30,5 25.5,9 30,13"/><polygon points="43,5 47.5,9 43,13"/><polygon points="60,5 64.5,9 60,13"/><rect x="65" y="5" width="1.3" height="8"/></g></svg>
<svg class="abs" style="left:651px;top:517px" width="100" height="17"><polygon points="0,0 96,0 83,16 0,16" fill="#fbfcfe" stroke="#9fb0cc" stroke-width="1"/></svg>
<div class="abs" style="left:660px;top:518px;font-size:11px;font-weight:bold;color:#233a7d;white-space:nowrap;line-height:15px">Profit _Loss</div>
<div class="abs" style="left:1069px;top:517px;width:17px;height:16px;background:linear-gradient(#eef1f6,#d4dbe6);border:1px solid #8090ad"></div>
<div class="abs" style="left:1086px;top:517px;width:61px;height:16px;background:linear-gradient(#eef1f6,#d4dbe6);border:1px solid #8090ad"></div>
<div class="abs" style="left:1147px;top:517px;width:17px;height:16px;background:linear-gradient(#eef1f6,#d4dbe6);border:1px solid #8090ad"></div>
<div class="abs" style="left:1074px;top:521px;width:0;height:0;border-top:4px solid transparent;border-bottom:4px solid transparent;border-right:5px solid #3e4c66"></div>
<div class="abs" style="left:1153px;top:521px;width:0;height:0;border-top:4px solid transparent;border-bottom:4px solid transparent;border-left:5px solid #3e4c66"></div>
<div class="abs" style="left:1113px;top:521px;width:1px;height:8px;background:#707888"></div>
<div class="abs" style="left:1115px;top:521px;width:1px;height:8px;background:#707888"></div>
<div class="abs" style="left:1117px;top:521px;width:1px;height:8px;background:#707888"></div>
<div class="abs" style="left:1119px;top:521px;width:1px;height:8px;background:#707888"></div>
<div class="abs" style="left:1px;top:534px;width:1182px;height:5px;background:#edf0f5;border-top:1px solid #b4b9c2"></div>
<div class="abs" style="left:1px;top:539px;width:230px;height:231px;background:#fff;border:1px solid #000"></div>
<div class="abs" style="left:2px;top:540px;width:193px;height:23px;background:#fff;border-bottom:1px solid #a0a0a0"></div>
<div class="abs" style="left:52px;top:540px;width:1px;height:22px;background:#e6e6e6"></div>
<div class="abs" style="left:7px;top:540px;width:1px;height:229px;background:#a0a0a0"></div>
<div class="ot" style="left:14px;top:546px;color:#000">Enable</div>
<div class="ot" style="left:60px;top:546px;color:#000">Option</div>
<div class="abs" style="left:8px;top:563px;width:45px;height:22px;background:#0078d7;border-bottom:1px solid #a0a0a0;border-right:1px solid #a0a0a0"></div>
<div class="abs" style="left:53px;top:563px;width:142px;height:22px;background:#fff;border-bottom:1px solid #a0a0a0"></div>
<div class="abs" style="left:53px;top:563px;width:142px;height:22px;overflow:hidden"><div class="ot" style="left:3px;top:4px;color:#000">Select All</div></div>
<div class="abs" style="left:23px;top:567px;width:13px;height:13px;background:#fff;border:1px solid #333"></div>
<div class="abs" style="left:8px;top:585px;width:45px;height:22px;background:#fff;border-bottom:1px solid #a0a0a0;border-right:1px solid #a0a0a0"></div>
<div class="abs" style="left:53px;top:585px;width:142px;height:22px;background:#008000;border-bottom:1px solid #a0a0a0"></div>
<div class="abs" style="left:53px;top:585px;width:142px;height:22px;overflow:hidden"><div class="ot" style="left:3px;top:4px;color:#e6f8d6">Entered Values</div></div>
<div class="abs" style="left:23px;top:589px;width:13px;height:13px;background:#fff;border:1px solid #333"></div>
<svg class="abs" style="left:23px;top:589px" width="13" height="13"><polyline points="3,6.5 5.5,9 10,3.5" fill="none" stroke="#222" stroke-width="1.2"/></svg>
<div class="abs" style="left:8px;top:607px;width:45px;height:22px;background:#fff;border-bottom:1px solid #a0a0a0;border-right:1px solid #a0a0a0"></div>
<div class="abs" style="left:53px;top:607px;width:142px;height:22px;background:#20b2aa;border-bottom:1px solid #a0a0a0"></div>
<div class="abs" style="left:53px;top:607px;width:142px;height:22px;overflow:hidden"><div class="ot" style="left:3px;top:4px;color:#f4fffd">Calculated Values</div></div>
<div class="abs" style="left:23px;top:611px;width:13px;height:13px;background:#fff;border:1px solid #333"></div>
<svg class="abs" style="left:23px;top:611px" width="13" height="13"><polyline points="3,6.5 5.5,9 10,3.5" fill="none" stroke="#222" stroke-width="1.2"/></svg>
<div class="abs" style="left:8px;top:629px;width:45px;height:22px;background:#fff;border-bottom:1px solid #a0a0a0;border-right:1px solid #a0a0a0"></div>
<div class="abs" style="left:53px;top:629px;width:142px;height:22px;background:#6a5acd;border-bottom:1px solid #a0a0a0"></div>
<div class="abs" style="left:53px;top:629px;width:142px;height:22px;overflow:hidden"><div class="ot" style="left:3px;top:4px;color:#f4f2ff">Formulas</div></div>
<div class="abs" style="left:23px;top:633px;width:13px;height:13px;background:#fff;border:1px solid #333"></div>
<svg class="abs" style="left:23px;top:633px" width="13" height="13"><polyline points="3,6.5 5.5,9 10,3.5" fill="none" stroke="#222" stroke-width="1.2"/></svg>
<div class="abs" style="left:8px;top:651px;width:45px;height:22px;background:#fff;border-bottom:1px solid #a0a0a0;border-right:1px solid #a0a0a0"></div>
<div class="abs" style="left:53px;top:651px;width:142px;height:22px;background:#4169e1;border-bottom:1px solid #a0a0a0"></div>
<div class="abs" style="left:53px;top:651px;width:142px;height:22px;overflow:hidden"><div class="ot" style="left:3px;top:4px;color:#f4f6ff">SysGen Formulas</div></div>
<div class="abs" style="left:23px;top:655px;width:13px;height:13px;background:#fff;border:1px solid #333"></div>
<div class="abs" style="left:8px;top:673px;width:45px;height:22px;background:#fff;border-bottom:1px solid #a0a0a0;border-right:1px solid #a0a0a0"></div>
<div class="abs" style="left:53px;top:673px;width:142px;height:22px;background:#87ceeb;border-bottom:1px solid #a0a0a0"></div>
<div class="abs" style="left:53px;top:673px;width:142px;height:22px;overflow:hidden"><div class="ot" style="left:3px;top:4px;color:#10253a">SysGen Formulas Errors</div></div>
<div class="abs" style="left:23px;top:677px;width:13px;height:13px;background:#fff;border:1px solid #333"></div>
<div class="abs" style="left:8px;top:695px;width:45px;height:22px;background:#fff;border-bottom:1px solid #a0a0a0;border-right:1px solid #a0a0a0"></div>
<div class="abs" style="left:53px;top:695px;width:142px;height:22px;background:#ff0000;border-bottom:1px solid #a0a0a0"></div>
<div class="abs" style="left:53px;top:695px;width:142px;height:22px;overflow:hidden"><div class="ot" style="left:3px;top:4px;color:#5a0000">Structural</div></div>
<div class="abs" style="left:23px;top:699px;width:13px;height:13px;background:#fff;border:1px solid #333"></div>
<svg class="abs" style="left:23px;top:699px" width="13" height="13"><polyline points="3,6.5 5.5,9 10,3.5" fill="none" stroke="#222" stroke-width="1.2"/></svg>
<div class="abs" style="left:8px;top:717px;width:45px;height:22px;background:#fff;border-bottom:1px solid #a0a0a0;border-right:1px solid #a0a0a0"></div>
<div class="abs" style="left:53px;top:717px;width:142px;height:22px;background:#bdb76b;border-bottom:1px solid #a0a0a0"></div>
<div class="abs" style="left:53px;top:717px;width:142px;height:22px;overflow:hidden"><div class="ot" style="left:3px;top:4px;color:#1c1c10">Names</div></div>
<div class="abs" style="left:23px;top:721px;width:13px;height:13px;background:#fff;border:1px solid #333"></div>
<svg class="abs" style="left:23px;top:721px" width="13" height="13"><polyline points="3,6.5 5.5,9 10,3.5" fill="none" stroke="#222" stroke-width="1.2"/></svg>
<div class="abs" style="left:8px;top:739px;width:45px;height:22px;background:#fff;border-bottom:1px solid #a0a0a0;border-right:1px solid #a0a0a0"></div>
<div class="abs" style="left:53px;top:739px;width:142px;height:22px;background:#fa8072;border-bottom:1px solid #a0a0a0"></div>
<div class="abs" style="left:53px;top:739px;width:142px;height:22px;overflow:hidden"><div class="ot" style="left:3px;top:4px;color:#3a1010">SysGen Names</div></div>
<div class="abs" style="left:23px;top:743px;width:13px;height:13px;background:#fff;border:1px solid #333"></div>
<div class="abs" style="left:8px;top:761px;width:45px;height:8px;background:#fff;border-bottom:1px solid #a0a0a0;border-right:1px solid #a0a0a0"></div>
<div class="abs" style="left:53px;top:761px;width:142px;height:8px;background:#ff8c00;border-bottom:1px solid #a0a0a0"></div>
<div class="abs" style="left:53px;top:761px;width:142px;height:8px;overflow:hidden"><div class="ot" style="left:3px;top:4px;color:#3a1a00">SysGen Names Errors</div></div>
<div class="abs" style="left:23px;top:765px;width:13px;height:4px;background:#fff;border:1px solid #333;border-bottom:none"></div>
<div class="abs" style="left:195px;top:540px;width:18px;height:229px;background:#a9a9a9"></div>
<div class="abs" style="left:213px;top:540px;width:17px;height:229px;background:#f0f0f0"></div>
<div class="abs" style="left:214px;top:557px;width:15px;height:121px;background:#cdcdcd"></div>
<svg class="abs" style="left:213px;top:541px" width="17" height="14"><polyline points="4.5,9 8.5,5 12.5,9" fill="none" stroke="#4a4a4a" stroke-width="2.2"/></svg>
<svg class="abs" style="left:213px;top:754px" width="17" height="14"><polyline points="4.5,5 8.5,9 12.5,5" fill="none" stroke="#4a4a4a" stroke-width="2.2"/></svg>
<div class="abs" style="left:235px;top:539px;width:637px;height:231px;background:#fff;border:1px solid #828790;border-right:1px solid #a0a0a0"></div>
<div class="ot" style="left:243px;top:545px;color:#000">Sheet</div>
<div class="ot" style="left:349px;top:545px;color:#000">Cell</div>
<div class="ot" style="left:410px;top:545px;color:#000">Value 1</div>
<div class="ot" style="left:505px;top:545px;color:#000">Value 2</div>
<div class="ot" style="left:599px;top:545px;color:#000">Change Description</div>
<div class="abs" style="left:343px;top:540px;width:1px;height:25px;background:#eaeaea"></div>
<div class="abs" style="left:403px;top:540px;width:1px;height:25px;background:#eaeaea"></div>
<div class="abs" style="left:499px;top:540px;width:1px;height:25px;background:#eaeaea"></div>
<div class="abs" style="left:593px;top:540px;width:1px;height:25px;background:#eaeaea"></div>
<div class="abs" style="left:844px;top:540px;width:1px;height:25px;background:#eaeaea"></div>
<div class="abs" style="left:238px;top:581px;width:615px;height:1px;background:#f0f0f0"></div>
<div class="ot" style="left:243px;top:567px;color:#6a5acd">Profit &amp; Loss</div>
<div class="ot" style="left:349px;top:567px;color:#6a5acd">B6</div>
<div class="ot" style="left:410px;top:567px;color:#6a5acd">=B3-B4-B5</div>
<div class="ot" style="left:505px;top:567px;color:#6a5acd">=SUM(B3:B4)</div>
<div class="ot" style="left:599px;top:567px;color:#6a5acd">Formula Changed.</div>
<div class="abs" style="left:238px;top:598px;width:615px;height:1px;background:#f0f0f0"></div>
<div class="ot" style="left:243px;top:584px;color:#6a5acd">Profit &amp; Loss</div>
<div class="ot" style="left:349px;top:584px;color:#6a5acd">C6</div>
<div class="ot" style="left:410px;top:584px;color:#6a5acd">=C3-C4-C5</div>
<div class="ot" style="left:505px;top:584px;color:#6a5acd">=SUM(C3:C4)</div>
<div class="ot" style="left:599px;top:584px;color:#6a5acd">Formula Changed.</div>
<div class="abs" style="left:238px;top:615px;width:615px;height:1px;background:#f0f0f0"></div>
<div class="ot" style="left:243px;top:601px;color:#6a5acd">Profit &amp; Loss</div>
<div class="ot" style="left:349px;top:601px;color:#6a5acd">D6</div>
<div class="ot" style="left:410px;top:601px;color:#6a5acd">=D3-D4-D5</div>
<div class="ot" style="left:505px;top:601px;color:#6a5acd">=SUM(D3:D4)</div>
<div class="ot" style="left:599px;top:601px;color:#6a5acd">Formula Changed.</div>
<div class="abs" style="left:238px;top:632px;width:615px;height:1px;background:#f0f0f0"></div>
<div class="ot" style="left:243px;top:618px;color:#6a5acd">Profit &amp; Loss</div>
<div class="ot" style="left:349px;top:618px;color:#6a5acd">E6</div>
<div class="ot" style="left:410px;top:618px;color:#6a5acd">=E3-E4-E5</div>
<div class="ot" style="left:505px;top:618px;color:#6a5acd">=SUM(E3:E4)</div>
<div class="ot" style="left:599px;top:618px;color:#6a5acd">Formula Changed.</div>
<div class="abs" style="left:238px;top:649px;width:615px;height:1px;background:#f0f0f0"></div>
<div class="ot" style="left:243px;top:635px;color:#6a5acd">Profit &amp; Loss</div>
<div class="ot" style="left:349px;top:635px;color:#6a5acd">F6</div>
<div class="ot" style="left:410px;top:635px;color:#6a5acd">=F3-F4-F5</div>
<div class="ot" style="left:505px;top:635px;color:#6a5acd">=SUM(F3:F4)</div>
<div class="ot" style="left:599px;top:635px;color:#6a5acd">Formula Changed.</div>
<div class="abs" style="left:238px;top:666px;width:615px;height:1px;background:#f0f0f0"></div>
<div class="ot" style="left:243px;top:652px;color:#6a5acd">Profit &amp; Loss</div>
<div class="ot" style="left:349px;top:652px;color:#6a5acd">G6</div>
<div class="ot" style="left:410px;top:652px;color:#6a5acd">=G3-G4-G5</div>
<div class="ot" style="left:505px;top:652px;color:#6a5acd">=SUM(G3:G4)</div>
<div class="ot" style="left:599px;top:652px;color:#6a5acd">Formula Changed.</div>
<div class="abs" style="left:238px;top:683px;width:615px;height:1px;background:#f0f0f0"></div>
<div class="ot" style="left:243px;top:669px;color:#1e8c1e">Profit &amp; Loss</div>
<div class="ot" style="left:349px;top:669px;color:#1e8c1e">A1</div>
<div class="ot" style="left:410px;top:669px;color:#1e8c1e">Profit &amp; Loss for...</div>
<div class="ot" style="left:505px;top:669px;color:#1e8c1e">Profit &amp; Loss for...</div>
<div class="ot" style="left:599px;top:669px;color:#1e8c1e">Entered Value Changed.</div>
<div class="abs" style="left:238px;top:700px;width:615px;height:1px;background:#f0f0f0"></div>
<div class="ot" style="left:243px;top:686px;color:#1e8c1e">Profit &amp; Loss</div>
<div class="ot" style="left:349px;top:686px;color:#1e8c1e">B3</div>
<div class="ot" style="left:410px;top:686px;color:#1e8c1e">$177 (177)</div>
<div class="ot" style="left:505px;top:686px;color:#1e8c1e">$367 (367)</div>
<div class="ot" style="left:599px;top:686px;color:#1e8c1e">Entered Value Changed.</div>
<div class="abs" style="left:238px;top:717px;width:615px;height:1px;background:#f0f0f0"></div>
<div class="ot" style="left:243px;top:703px;color:#1e8c1e">Profit &amp; Loss</div>
<div class="ot" style="left:349px;top:703px;color:#1e8c1e">B4</div>
<div class="ot" style="left:410px;top:703px;color:#1e8c1e">$5 (5)</div>
<div class="ot" style="left:505px;top:703px;color:#1e8c1e">$10 (10)</div>
<div class="ot" style="left:599px;top:703px;color:#1e8c1e">Entered Value Changed.</div>
<div class="abs" style="left:238px;top:734px;width:615px;height:1px;background:#f0f0f0"></div>
<div class="ot" style="left:243px;top:720px;color:#1e8c1e">Profit &amp; Loss</div>
<div class="ot" style="left:349px;top:720px;color:#1e8c1e">B8</div>
<div class="ot" style="left:410px;top:720px;color:#1e8c1e">$5.78 (5.78225...</div>
<div class="ot" style="left:505px;top:720px;color:#1e8c1e">$3.68 (3.68392...</div>
<div class="ot" style="left:599px;top:720px;color:#1e8c1e">Entered Value Changed.</div>
<div class="abs" style="left:238px;top:751px;width:615px;height:1px;background:#f0f0f0"></div>
<div class="ot" style="left:243px;top:737px;color:#1e8c1e">Profit &amp; Loss</div>
<div class="ot" style="left:349px;top:737px;color:#1e8c1e">B9</div>
<div class="ot" style="left:410px;top:737px;color:#1e8c1e">$10.72 (10.724...</div>
<div class="ot" style="left:505px;top:737px;color:#1e8c1e">$12.08 (12.078...</div>
<div class="ot" style="left:599px;top:737px;color:#1e8c1e">Entered Value Changed.</div>
<div class="abs" style="left:238px;top:768px;width:615px;height:1px;background:#f0f0f0"></div>
<div class="ot" style="left:243px;top:754px;color:#1e8c1e">Profit &amp; Loss</div>
<div class="ot" style="left:349px;top:754px;color:#1e8c1e">B10</div>
<div class="ot" style="left:410px;top:754px;color:#1e8c1e">$8.40 (8.40486...</div>
<div class="ot" style="left:505px;top:754px;color:#1e8c1e">$11.94 (11.936...</div>
<div class="ot" style="left:599px;top:754px;color:#1e8c1e">Entered Value Changed.</div>
<div class="abs" style="left:343px;top:565px;width:1px;height:204px;background:#f0f0f0"></div>
<div class="abs" style="left:403px;top:565px;width:1px;height:204px;background:#f0f0f0"></div>
<div class="abs" style="left:499px;top:565px;width:1px;height:204px;background:#f0f0f0"></div>
<div class="abs" style="left:593px;top:565px;width:1px;height:204px;background:#f0f0f0"></div>
<div class="abs" style="left:843px;top:565px;width:1px;height:204px;background:#f0f0f0"></div>
<div class="abs" style="left:854px;top:540px;width:16px;height:229px;background:#f0f0f0"></div>
<div class="abs" style="left:854px;top:558px;width:15px;height:17px;background:#cdcdcd"></div>
<svg class="abs" style="left:853px;top:542px" width="17" height="14"><polyline points="4.5,9 8.5,5 12.5,9" fill="none" stroke="#4a4a4a" stroke-width="2.2"/></svg>
<svg class="abs" style="left:853px;top:753px" width="17" height="14"><polyline points="4.5,5 8.5,9 12.5,5" fill="none" stroke="#4a4a4a" stroke-width="2.2"/></svg>
<div class="abs" style="left:872px;top:539px;width:4px;height:231px;background:#f0f0f0"></div><svg class="abs" style="left:873px;top:539px" width="3" height="231"><defs><pattern id="chk" width="2" height="2" patternUnits="userSpaceOnUse"><rect x="0" y="0" width="1" height="1" fill="#202020"/><rect x="1" y="1" width="1" height="1" fill="#202020"/><rect x="1" y="0" width="1" height="1" fill="#e0e0e0"/><rect x="0" y="1" width="1" height="1" fill="#e0e0e0"/></pattern></defs><rect width="3" height="231" fill="url(#chk)"/></svg>
<div class="abs" style="left:876px;top:539px;width:307px;height:231px;background:#fff;border:1px solid #000;border-right:1px solid #000"></div>
<svg class="abs" style="left:877px;top:539px" width="305" height="230" font-family="Liberation Sans" ><text x="54" y="108.8" font-size="10.2" fill="#555" text-anchor="end">0</text><line x1="59" y1="89.8" x2="295" y2="89.8" stroke="#e6e6e6" stroke-width="1"/><text x="54" y="93.6" font-size="10.2" fill="#555" text-anchor="end">20</text><line x1="59" y1="74.6" x2="295" y2="74.6" stroke="#e6e6e6" stroke-width="1"/><text x="54" y="78.4" font-size="10.2" fill="#555" text-anchor="end">40</text><line x1="59" y1="59.4" x2="295" y2="59.4" stroke="#e6e6e6" stroke-width="1"/><text x="54" y="63.2" font-size="10.2" fill="#555" text-anchor="end">60</text><line x1="59" y1="44.2" x2="295" y2="44.2" stroke="#e6e6e6" stroke-width="1"/><text x="54" y="48.0" font-size="10.2" fill="#555" text-anchor="end">80</text><line x1="59" y1="29.0" x2="295" y2="29.0" stroke="#e6e6e6" stroke-width="1"/><text x="54" y="32.8" font-size="10.2" fill="#555" text-anchor="end">100</text><line x1="59" y1="13.8" x2="295" y2="13.8" stroke="#e6e6e6" stroke-width="1"/><text x="54" y="17.6" font-size="10.2" fill="#555" text-anchor="end">120</text><line x1="295" y1="14" x2="295" y2="105" stroke="#e6e6e6"/><defs><linearGradient id="gg" x1="0" x2="1"><stop offset="0" stop-color="#9cc46a"/><stop offset="1" stop-color="#4f8a1e"/></linearGradient><linearGradient id="gb" x1="0" x2="1"><stop offset="0" stop-color="#5ba3d9"/><stop offset="1" stop-color="#1f6aa8"/></linearGradient><linearGradient id="gy" x1="0" x2="1"><stop offset="0" stop-color="#f5dc5a"/><stop offset="1" stop-color="#d9b21e"/></linearGradient></defs><rect x="59.0" y="18.4" width="16.9" height="86.6" fill="url(#gg)" stroke="#1a1a1a" stroke-width="0.8"/><rect x="75.9" y="74.6" width="16.9" height="30.4" fill="url(#gb)" stroke="#1a1a1a" stroke-width="0.8"/><rect x="92.7" y="100.4" width="16.9" height="4.6" fill="url(#gy)" stroke="#1a1a1a" stroke-width="0.8"/><line x1="59" y1="13" x2="59" y2="105.5" stroke="#000" stroke-width="1.2"/><line x1="59" y1="105.5" x2="295" y2="105.5" stroke="#000" stroke-width="1.2"/><text transform="translate(71.4,109) rotate(-90)" font-size="9.8" fill="#555" text-anchor="end" letter-spacing="0">Entered Values</text><text transform="translate(88.3,109) rotate(-90)" font-size="9.8" fill="#555" text-anchor="end" letter-spacing="0">Calculated Values</text><text transform="translate(105.1,109) rotate(-90)" font-size="9.8" fill="#555" text-anchor="end" letter-spacing="0">Formulas</text><text transform="translate(122.0,109) rotate(-90)" font-size="9.8" fill="#555" text-anchor="end" letter-spacing="0">SysGen Formulas</text><text transform="translate(138.9,109) rotate(-90)" font-size="9.8" fill="#555" text-anchor="end" letter-spacing="0">SysGen Fomulas (Errors)</text><text transform="translate(155.7,109) rotate(-90)" font-size="9.8" fill="#555" text-anchor="end" letter-spacing="0">Structural</text><text transform="translate(172.6,109) rotate(-90)" font-size="9.8" fill="#555" text-anchor="end" letter-spacing="0">Names</text><text transform="translate(189.4,109) rotate(-90)" font-size="9.8" fill="#555" text-anchor="end" letter-spacing="0">SysGen Names</text><text transform="translate(206.3,109) rotate(-90)" font-size="9.8" fill="#555" text-anchor="end" letter-spacing="0">SysGen Names (Errors)</text><text transform="translate(223.1,109) rotate(-90)" font-size="9.8" fill="#555" text-anchor="end" letter-spacing="0">Macros</text><text transform="translate(240.0,109) rotate(-90)" font-size="9.8" fill="#555" text-anchor="end" letter-spacing="0">Data Connections</text><text transform="translate(256.9,109) rotate(-90)" font-size="9.8" fill="#555" text-anchor="end" letter-spacing="0">Cell Formats</text><text transform="translate(273.7,109) rotate(-90)" font-size="9.8" fill="#555" text-anchor="end" letter-spacing="0">Cell Protections</text><text transform="translate(290.6,109) rotate(-90)" font-size="9.8" fill="#555" text-anchor="end" letter-spacing="0">Sheet/Workbook Protection</text><text transform="translate(17,116) rotate(-90)" font-size="11" fill="#111" text-anchor="middle" font-weight="normal">Count</text></svg>
<div class="abs" style="left:1px;top:770px;width:1182px;height:22px;background:#f0f0f0"></div>
<div class="abs" style="left:5px;top:774px;font-size:11.4px;color:#000;white-space:nowrap;line-height:14px">Ready - File 1: [P and L 1990.xls] - File 2: [P and L 1991.xls] - Total Displayed Items: 159</div>
<div class="abs" style="left:1178px;top:778px;width:2px;height:2px;background:#b0b0b0"></div>
<div class="abs" style="left:1174px;top:782px;width:2px;height:2px;background:#b0b0b0"></div>
<div class="abs" style="left:1178px;top:782px;width:2px;height:2px;background:#b0b0b0"></div>
<div class="abs" style="left:1170px;top:786px;width:2px;height:2px;background:#b0b0b0"></div>
<div class="abs" style="left:1174px;top:786px;width:2px;height:2px;background:#b0b0b0"></div>
<div class="abs" style="left:1178px;top:786px;width:2px;height:2px;background:#b0b0b0"></div>
</body></html>
